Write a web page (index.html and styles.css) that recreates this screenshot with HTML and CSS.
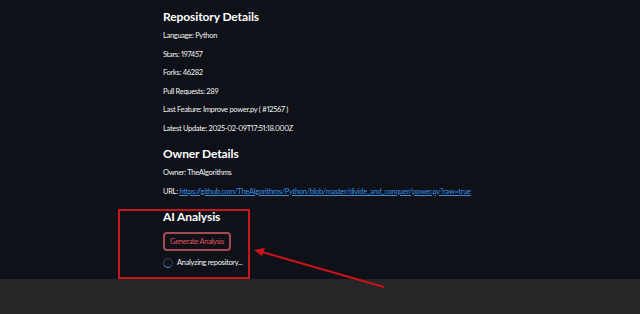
FILE: index.html
```html
<!DOCTYPE html>
<html lang="en">
<head>
    <meta charset="UTF-8">
    <meta name="viewport" content="width=device-width, initial-scale=1.0">
    <title>Repository Analysis</title>
    <link rel="stylesheet" href="styles.css">
</head>
<body>
    <div class="app">
        <div class="main">
            <h2 class="section-title first">Repository Details</h2>
            <p>Language: Python</p>
            <p>Stars: 197457</p>
            <p>Forks: 46282</p>
            <p>Pull Requests: 289</p>
            <p>Last Feature: Improve power.py ( #12567 )</p>
            <p>Latest Update: 2025-02-09T17:51:18.000Z</p>

            <h2 class="section-title">Owner Details</h2>
            <p>Owner: TheAlgorithms</p>
            <p>URL: <a href="#">https://github.com/TheAlgorithms/Python/blob/master/divide_and_conquer/power.py?raw=true</a></p>

            <h2 class="section-title">AI Analysis</h2>
            <button class="analyze-btn">Generate Analysis</button>
            <div class="status-row">
                <span class="spinner"></span>
                <span>Analyzing repository...</span>
            </div>
        </div>
        <div class="footer"></div>

        <!-- annotation drawn over the screenshot -->
        <div class="highlight-box"></div>
        <svg class="arrow" width="640" height="314" viewBox="0 0 640 314">
            <line x1="384" y1="287" x2="262" y2="252" stroke="#d0121b" stroke-width="2"/>
            <polygon points="254,250 265,248 262,256" fill="#d0121b"/>
        </svg>
    </div>
</body>
</html>
```

FILE: styles.css
```css
body {
    margin: 0;
    background-color: #0e1117;
    font-family: "Lato", "Open Sans", sans-serif;
    color: #fafafa;
}
.app {
    position: relative;
    width: 640px;
    height: 314px;
    overflow: hidden;
}
.main {
    height: 279px;
    padding-left: 163px;
    box-sizing: border-box;
    display: flex;
    flex-direction: column;
    align-items: flex-start;
}
.section-title {
    margin: 5.5px 0 0;
    font-size: 12px;
    line-height: 20px;
    font-weight: 700;
    letter-spacing: -0.1px;
    color: #ffffff;
}
.section-title.first {
    margin-top: 7px;
}
.main p {
    margin: 0;
    font-size: 7.5px;
    line-height: 18.6px;
    letter-spacing: -0.3px;
    color: #f4f4f4;
    white-space: nowrap;
    font-variant-numeric: proportional-nums;
}
.main a {
    color: #3d8fe0;
    text-decoration: underline;
}
.analyze-btn {
    margin-top: 5px;
    height: 19px;
    padding: 0 5px;
    background-color: #0e1117;
    border: 2px solid #a44a54;
    border-radius: 4px;
    color: #e5525f;
    font-family: "Lato", "Open Sans", sans-serif;
    font-size: 7.5px;
    letter-spacing: -0.3px;
}
.status-row {
    margin-top: 3px;
    height: 18px;
    display: flex;
    align-items: center;
    gap: 4px;
    font-size: 7.5px;
    letter-spacing: -0.3px;
    color: #f4f4f4;
}
.spinner {
    width: 8px;
    height: 8px;
    border: 1.2px solid #3a4a66;
    border-bottom-color: #4c8ff0;
    border-radius: 50%;
    transform: rotate(20deg);
}
.footer {
    height: 35px;
    background-color: #262626;
}
.highlight-box {
    position: absolute;
    left: 118px;
    top: 209px;
    width: 132px;
    height: 70px;
    box-sizing: border-box;
    border: 2px solid #c8161d;
}
.arrow {
    position: absolute;
    left: 0;
    top: 0;
}
```
